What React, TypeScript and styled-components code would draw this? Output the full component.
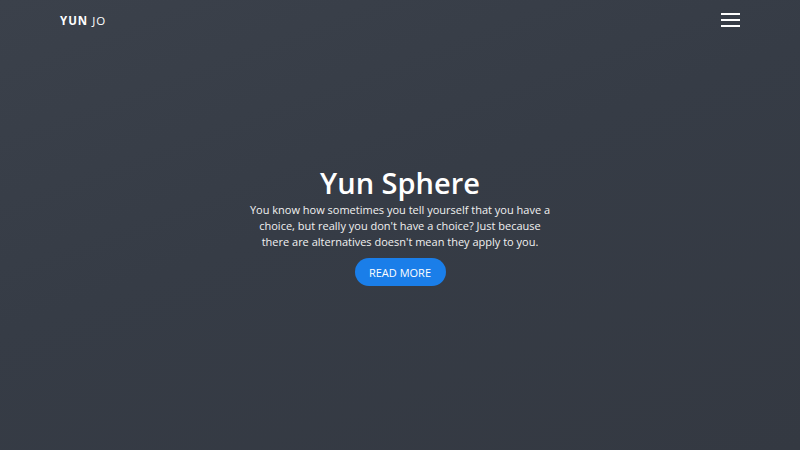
import type { FC } from 'react';
import styled, { createGlobalStyle } from 'styled-components';

const GlobalStyle = createGlobalStyle`
	* {
		box-sizing: border-box;
	}

	html,
	body {
		margin: 0;
		padding: 0;
		height: 100%;
	}

	body {
		font-family: 'Open Sans', 'Noto Sans', sans-serif;
		color: #ffffff;
		background: #353b45;
	}

	#root {
		height: 100%;
	}
`;

const App: FC = () => {
	return (
		<>
			<GlobalStyle />
			<Page>
				<Header>
					<Logo>
						<strong>YUN</strong> JO
					</Logo>
					<BurgerMenu aria-label="menu">
						<span />
						<span />
						<span />
					</BurgerMenu>
				</Header>
				<Hero>
					<Title>Yun Sphere</Title>
					<Lead>
						You know how sometimes you tell yourself that you have a choice, but
						really you don&apos;t have a choice? Just because there are
						alternatives doesn&apos;t mean they apply to you.
					</Lead>
					<ReadMore>READ MORE</ReadMore>
				</Hero>
			</Page>
		</>
	);
};

export default App;

const Page = styled.div`
	position: relative;
	display: flex;
	flex-direction: column;
	width: 100%;
	height: 100vh;
	overflow: hidden;
	background: linear-gradient(160deg, #3b414b 0%, #363c46 45%, #343942 100%);
`;

const Header = styled.header`
	position: absolute;
	top: 0;
	left: 0;
	right: 0;
	z-index: 10;
	display: flex;
	justify-content: space-between;
	align-items: center;
	height: 40px;
	padding: 0 60px;
`;

const Logo = styled.a`
	font-size: 11.5px;
	letter-spacing: 1px;
	color: #ffffff;
	font-weight: 400;

	strong {
		font-weight: 700;
	}
`;

const BurgerMenu = styled.div`
	display: flex;
	flex-direction: column;
	gap: 4.5px;
	width: 19px;
	cursor: pointer;

	span {
		display: block;
		height: 1.5px;
		width: 100%;
		background: #ffffff;
	}
`;

const Hero = styled.section`
	flex: 1;
	display: flex;
	flex-direction: column;
	align-items: center;
	justify-content: center;
	text-align: center;
	padding-top: 2px;
`;

const Title = styled.h1`
	margin: 0 0 2px;
	font-size: 29px;
	font-weight: 600;
	line-height: 1.2;
	color: #ffffff;
`;

const Lead = styled.p`
	margin: 0 0 8px;
	max-width: 305px;
	font-size: 11px;
	line-height: 16px;
	color: #f1f1f1;
`;

const ReadMore = styled.button`
	width: 91px;
	height: 28px;
	border: none;
	border-radius: 14px;
	background: #1a7ee9;
	color: #ffffff;
	font-family: inherit;
	font-size: 11px;
	cursor: pointer;
`;
